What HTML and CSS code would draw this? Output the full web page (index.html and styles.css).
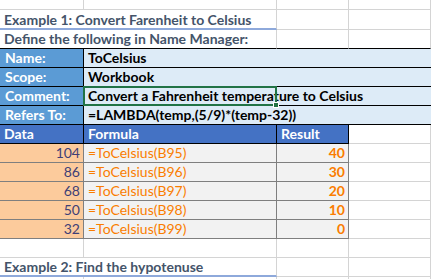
FILE: index.html
```html
<!DOCTYPE html>
<html>
<head>
<meta charset="utf-8">
<link rel="stylesheet" href="styles.css">
</head>
<body>
<div class="sheet">
  <div class="c"></div><div class="c"></div><div class="c"></div><div class="c"></div>

  <div class="c span2 heading">Example 1: Convert Farenheit to Celsius</div><div class="c"></div><div class="c"></div>

  <div class="c span2 sub bb">Define the following in Name Manager:</div><div class="c bb"></div><div class="c bb"></div>

  <div class="c lab">Name:</div><div class="c val">ToCelsius</div>
  <div class="c lab">Scope:</div><div class="c val">Workbook</div>
  <div class="c lab">Comment:</div><div class="c val">Convert a Fahrenheit temperature to Celsius</div>
  <div class="c lab">Refers To:</div><div class="c val">=LAMBDA(temp,(5/9)*(temp-32))</div>

  <div class="c th">Data</div><div class="c th">Formula</div><div class="c th">Result</div><div class="c"></div>

  <div class="c inp">104</div><div class="c calc">=ToCelsius(B95)</div><div class="c calc res">40</div><div class="c"></div>
  <div class="c inp">86</div><div class="c calc">=ToCelsius(B96)</div><div class="c calc res">30</div><div class="c"></div>
  <div class="c inp">68</div><div class="c calc">=ToCelsius(B97)</div><div class="c calc res">20</div><div class="c"></div>
  <div class="c inp">50</div><div class="c calc">=ToCelsius(B98)</div><div class="c calc res">10</div><div class="c"></div>
  <div class="c inp">32</div><div class="c calc">=ToCelsius(B99)</div><div class="c calc res">0</div><div class="c"></div>

  <div class="c"></div><div class="c"></div><div class="c"></div><div class="c"></div>

  <div class="c span2 heading">Example 2: Find the hypotenuse</div><div class="c"></div><div class="c"></div>

  <div class="c last"></div><div class="c last"></div><div class="c last"></div><div class="c last"></div>

  <div class="sel"><div class="handle"></div></div>
</div>
</body>
</html>
```

FILE: styles.css
```css
html, body {
  margin: 0;
  padding: 0;
  background: #ffffff;
  overflow: hidden;
}

body {
  font-family: Lato, "Liberation Sans", sans-serif;
  font-size: 14px;
  color: #000000;
}

.sheet {
  position: relative;
  width: 431px;
  height: 279px;
  overflow: hidden;
  display: grid;
  grid-template-columns: 84px 193px 72px 1fr;
  grid-template-rows: 10px 20px repeat(13, 19px) 2px;
}

.c {
  box-sizing: border-box;
  min-width: 0;
  display: flex;
  align-items: flex-end;
  padding: 0 3px 2px 4px;
  line-height: 15px;
  white-space: nowrap;
  border-right: 1px solid #d4d4d4;
  border-bottom: 1px solid #d4d4d4;
}

.last {
  border-bottom: none;
}

.span2 {
  grid-column: span 2;
}

.heading {
  font-weight: bold;
  color: #44546a;
  border-bottom: 2px solid #8ea9db;
  padding-bottom: 1px;
}

.sub {
  font-weight: bold;
  color: #44546a;
}

.bb {
  border-bottom-color: #000000;
}

.lab {
  background: #5b9bd5;
  color: #ffffff;
  font-weight: bold;
  padding-left: 5px;
  border-right-color: #000000;
  border-bottom-color: #000000;
}

.val {
  grid-column: 2 / 5;
  background: #ddebf7;
  font-weight: bold;
  border-right: none;
  border-bottom-color: #000000;
}

.th {
  background: #4472c4;
  color: #ffffff;
  font-weight: bold;
  border-right-color: #000000;
  border-bottom-color: #000000;
}

.th:first-child {
  padding-left: 5px;
}

.inp {
  background: #fccb9c;
  color: #3f3f76;
  justify-content: flex-end;
  border-right-color: #7f7f7f;
  border-bottom-color: #7f7f7f;
}

.calc {
  background: #f2f2f2;
  color: #fa7d00;
  border-right-color: #7f7f7f;
  border-bottom-color: #7f7f7f;
}

.res {
  font-weight: bold;
  justify-content: flex-end;
}

.sel {
  position: absolute;
  left: 83px;
  top: 86px;
  width: 194px;
  height: 20px;
  box-sizing: border-box;
  border: 2px solid #217346;
}

.handle {
  position: absolute;
  right: -4px;
  bottom: -4px;
  width: 6px;
  height: 6px;
  box-sizing: border-box;
  background: #217346;
  border: 1px solid #ffffff;
}
```
